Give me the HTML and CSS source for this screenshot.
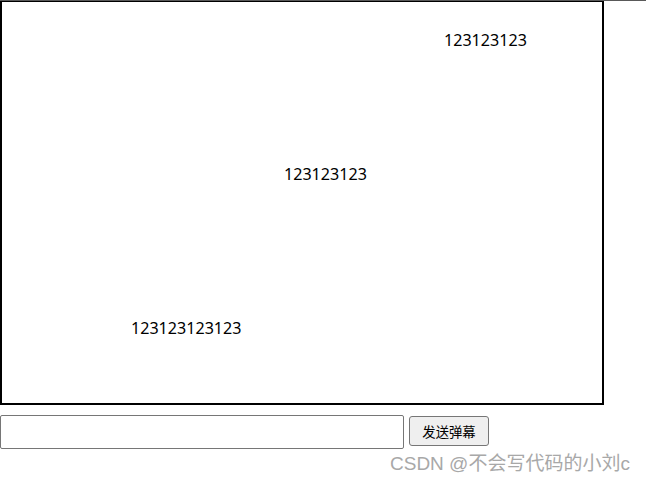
FILE: index.html
```html
<!DOCTYPE html>
<html lang="zh">
<head>
<meta charset="utf-8">
<title>弹幕</title>
<link rel="stylesheet" href="styles.css">
</head>
<body>
<div class="stage">
  <span class="danmu d1">123123123</span>
  <span class="danmu d2">123123123</span>
  <span class="danmu d3">123123123123</span>
</div>
<div class="controls">
  <input class="msg" type="text">
  <button class="send" type="button">发送弹幕</button>
</div>
<div class="watermark">CSDN @不会写代码的小刘c</div>
</body>
</html>
```
FILE: styles.css
```css
html, body {
  margin: 0;
  padding: 0;
  background: #fff;
}
body {
  border-top: 1px solid #595959;
  font-family: "Noto Sans", "Noto Sans CJK SC", sans-serif;
  position: relative;
  min-height: 491px;
}
.stage {
  position: relative;
  width: 600px;
  height: 401px;
  border: 2px solid #000;
  border-top-width: 1px;
  overflow: hidden;
}
.danmu {
  position: absolute;
  font-size: 16.1px;
  line-height: 22px;
  color: #000;
  white-space: nowrap;
}
.d1 { left: 442px; top: 27px; }
.d2 { left: 282px; top: 161px; }
.d3 { left: 129px; top: 315px; }
.controls {
  display: flex;
  align-items: flex-start;
  gap: 5px;
  margin-top: 10px;
}
.msg {
  box-sizing: border-box;
  width: 404px;
  height: 34px;
  margin: 0;
  border: 1px solid #767676;
  border-radius: 2px;
  padding: 1px 2px;
  font-size: 13.333px;
}
.send {
  box-sizing: border-box;
  width: 80px;
  height: 30px;
  margin: 1px 0 0 0;
  padding: 0;
  border: 1px solid #767676;
  border-radius: 3px;
  background: #efefef;
  color: #000;
  font-family: "Noto Sans CJK SC", sans-serif;
  font-size: 13.333px;
}
.watermark {
  position: absolute;
  left: 390px;
  top: 450px;
  font-family: "Liberation Sans", "Noto Sans CJK SC", sans-serif;
  font-size: 19px;
  line-height: 26px;
  color: #a8a8a8;
  white-space: nowrap;
}
```
